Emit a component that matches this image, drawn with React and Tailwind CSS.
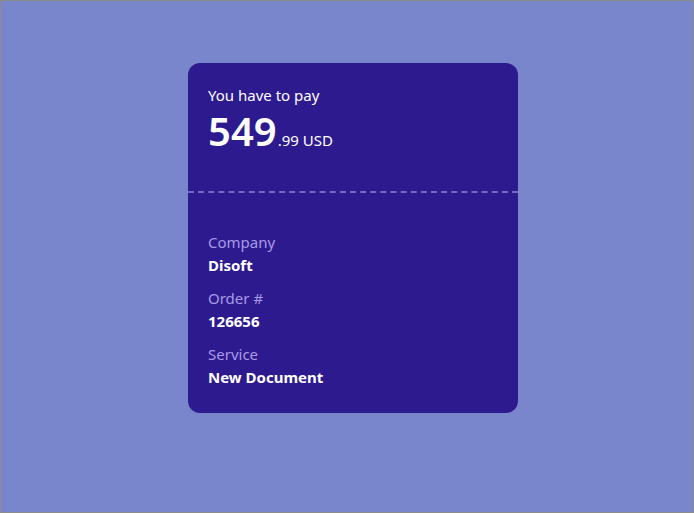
export default function App() {
  const rows = [
    { label: "Company", value: "Disoft" },
    { label: "Order #", value: "126656" },
    { label: "Service", value: "New Document" },
  ];

  return (
    <div
      className="bg-[#7986cb] border border-[#8c8c8c] w-[694px] h-[513px] pt-[62px] pl-[187px]"
      style={{ fontFamily: '"Noto Sans", "Open Sans", sans-serif' }}
    >
      <div className="bg-[#2e1a8f] w-[330px] h-[350px] rounded-[12px] text-white overflow-hidden">
        <div className="px-5 pt-[21px] pb-[40px]">
          <p className="text-[15px] leading-[23px]">You have to pay</p>
          <p className="mt-1 text-[40px] leading-[40px] h-[40px] whitespace-nowrap">
            <span className="font-semibold">549</span>
            <span className="text-[15px] leading-none ml-[1px]">.99 USD</span>
          </p>
        </div>
        <div className="border-t-2 border-dashed border-[#7666c6]"></div>
        <div className="px-5 pt-[38px] flex flex-col gap-[10px]">
          {rows.map((r) => (
            <div key={r.label}>
              <p className="text-[15px] leading-[23px] text-[#a89ae6]">{r.label}</p>
              <p className="text-[15px] leading-[23px] font-bold">{r.value}</p>
            </div>
          ))}
        </div>
      </div>
    </div>
  );
}
